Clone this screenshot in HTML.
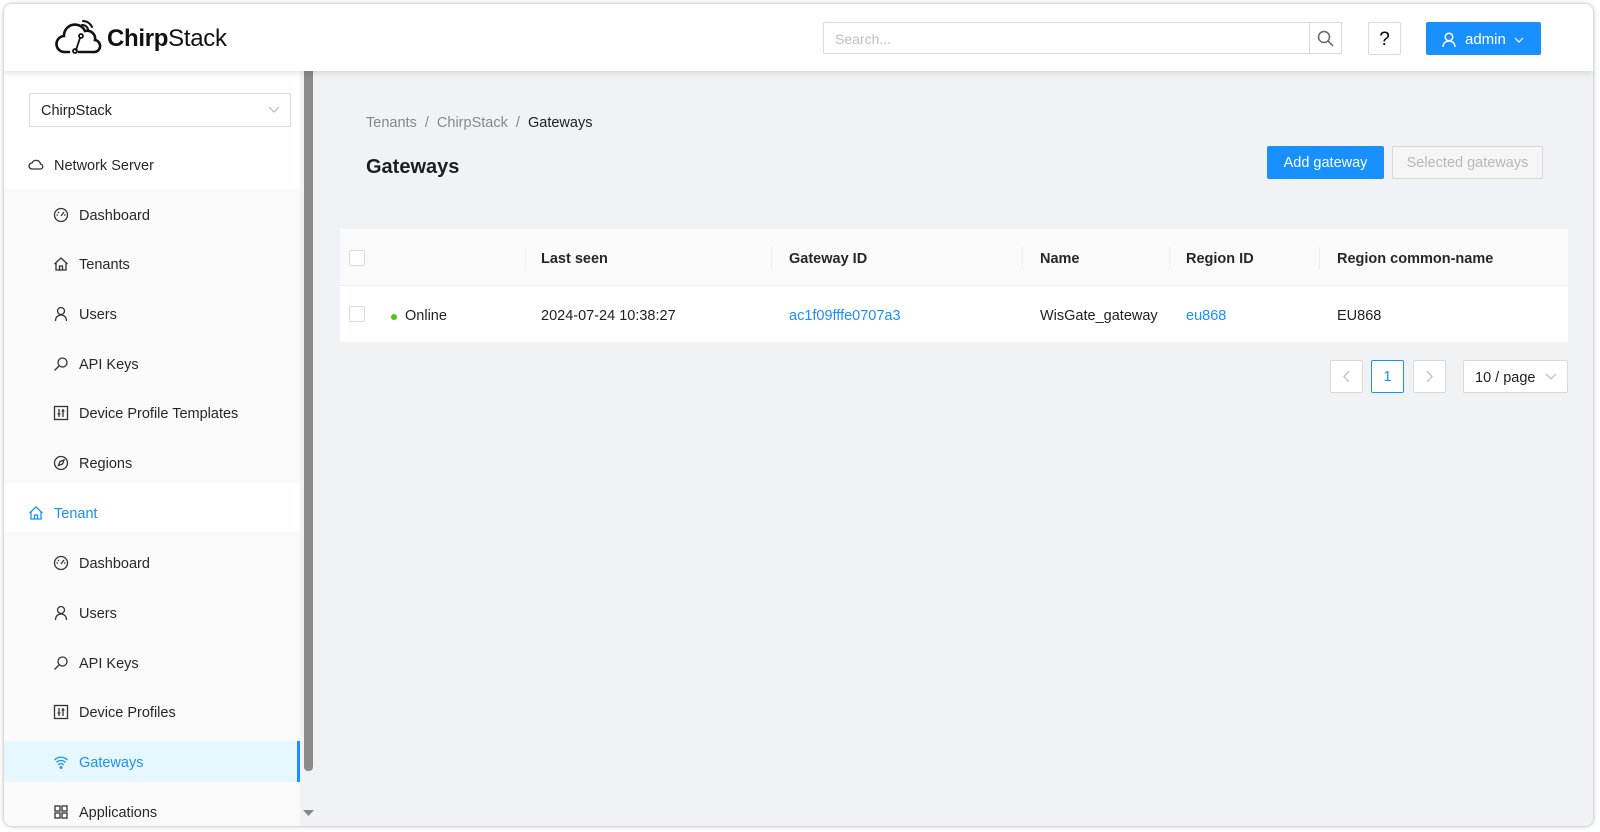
<!DOCTYPE html>
<html><head><meta charset="utf-8"><style>
*{box-sizing:border-box;margin:0;padding:0}
body{width:1600px;height:832px;background:#fff;font-family:"Liberation Sans",sans-serif;font-size:14px;color:rgba(0,0,0,.88);position:relative;overflow:hidden}
.frame{position:absolute;left:4px;top:4px;width:1589px;height:822px;border-radius:8px;background:#f0f2f5;box-shadow:0 0 4px rgba(0,0,0,.35);overflow:hidden}
.hdr{position:absolute;left:0;top:0;width:100%;height:67px;background:#fff;box-shadow:0 2px 6px rgba(0,0,0,.12);z-index:2}
.abs{position:absolute}
.side{position:absolute;left:0;top:67px;width:296px;height:755px;background:#fff}
.sub{position:absolute;left:0;width:296px;background:#fafafa}
.mi{position:absolute;left:0;width:296px;height:40px;line-height:44px;font-size:14.5px;color:rgba(0,0,0,.85)}
.mi svg{position:absolute;top:13px;width:16px;height:16px}
.mi span{position:absolute}
.sc{position:absolute;left:300px;top:67px;width:9px;height:700px;background:#8a8a8a;border-radius:0 0 4px 4px}
.btn{position:absolute;border-radius:2px;font-size:14.5px;text-align:center}
.cell{position:absolute;font-size:14.5px}
.hd{font-weight:bold;color:rgba(0,0,0,.85)}
.cb{position:absolute;width:16px;height:16px;border:1px solid #d9d9d9;border-radius:2px;background:#fff}
</style></head><body>
<div class="frame">
 <div class="hdr">
  <svg class="abs" style="left:51px;top:16px" width="48" height="36" viewBox="0 0 48 36" fill="none" stroke="#111" stroke-width="2.6" stroke-linecap="round">
   <path d="M14 32H10a8 8 0 0 1-1-16 11 11 0 0 1 21-5 8 8 0 0 1 10 9 6 6 0 0 1-2 12H24"/>
   <path d="M27 5a6 6 0 0 1 6 4M28 1a10 10 0 0 1 9 6" stroke-width="2"/>
   <circle cx="26" cy="16" r="2" stroke-width="1.8"/><path d="M25 18l-4 12" stroke-width="1.8"/><circle cx="20" cy="31" r="2" stroke-width="1.8"/>
  </svg>
  <div class="abs" style="left:103px;top:21px;font-size:24px;color:#111;letter-spacing:-0.3px"><b>Chirp</b>Stack</div>
  <div class="abs" style="left:819px;top:18px;width:487px;height:32px;border:1px solid #d9d9d9;border-radius:2px 0 0 2px;background:#fff;padding:8px 11px;color:#bfbfbf;font-size:14px">Search...</div>
  <div class="abs" style="left:1305px;top:18px;width:33px;height:32px;border:1px solid #d9d9d9;background:#fff">
   <svg width="31" height="30" viewBox="0 0 31 30" fill="none" stroke="#666" stroke-width="1.5"><circle cx="14" cy="14" r="5.5"/><path d="M18 18l5 5"/></svg></div>
  <div class="abs" style="left:1364px;top:18px;width:33px;height:33px;border:1px solid #d9d9d9;border-radius:2px;background:#fff;text-align:center;line-height:33px;font-size:19px;color:#000">?</div>
  <div class="abs" style="left:1422px;top:18px;width:115px;height:33px;background:#1890ff;border-radius:2px;color:#fff;font-size:15px;line-height:35px">
   <svg class="abs" style="left:16px;top:10px" width="14" height="15" viewBox="0 0 14 15" fill="none" stroke="#fff" stroke-width="1.5"><circle cx="7" cy="5" r="3.8"/><path d="M1 15c0-4 3-6 6-6s6 2 6 6"/></svg>
   <span class="abs" style="left:39px">admin</span>
   <svg class="abs" style="left:88px;top:14px" width="10" height="8" viewBox="0 0 10 8" fill="none" stroke="#fff" stroke-width="1.2"><path d="M1 2l4 4 4-4"/></svg>
  </div>
 </div>

 <div class="side">
  <div class="abs" style="left:25px;top:22px;width:262px;height:34px;border:1px solid #d9d9d9;border-radius:2px;background:#fff;padding:9px 11px;font-size:14.5px">ChirpStack
   <svg class="abs" style="right:10px;top:12px" width="12" height="8" viewBox="0 0 12 8" fill="none" stroke="#bbb" stroke-width="1.2"><path d="M1 1l5 5 5-5"/></svg></div>
  <div class="mi" style="top:73px"><svg style="left:24px" viewBox="0 0 16 16" fill="none" stroke="#333" stroke-width="1.3"><path d="M4 12a3 3 0 0 1 0-6 4.5 4.5 0 0 1 8.5 1A2.5 2.5 0 0 1 12 12z"/></svg><span style="left:50px">Network Server</span></div>
  <div class="sub" style="top:118px;height:294px"></div>
  <div class="mi" style="top:123px"><svg style="left:49px" viewBox="0 0 16 16" fill="none" stroke="#333" stroke-width="1.3"><circle cx="8" cy="8" r="6.5"/><path d="M8 9l3-4M3.5 8h1.5M11 8h1.5M5 5l1 1"/></svg><span style="left:75px">Dashboard</span></div>
  <div class="mi" style="top:172px"><svg style="left:49px" viewBox="0 0 16 16" fill="none" stroke="#333" stroke-width="1.3"><path d="M1.5 8L8 2l6.5 6M3 7v7h10V7M6.5 14v-4h3v4"/></svg><span style="left:75px">Tenants</span></div>
  <div class="mi" style="top:222px"><svg style="left:49px" viewBox="0 0 16 16" fill="none" stroke="#333" stroke-width="1.3"><circle cx="8" cy="5" r="3.5"/><path d="M2.5 15c0-4 2.5-6 5.5-6s5.5 2 5.5 6"/></svg><span style="left:75px">Users</span></div>
  <div class="mi" style="top:272px"><svg style="left:49px" viewBox="0 0 16 16" fill="none" stroke="#333" stroke-width="1.3"><circle cx="9.5" cy="6.5" r="4.5"/><path d="M6 10l-4.5 4.5"/></svg><span style="left:75px">API Keys</span></div>
  <div class="mi" style="top:321px"><svg style="left:49px" viewBox="0 0 16 16" fill="none" stroke="#333" stroke-width="1.3"><rect x="1.5" y="1.5" width="13" height="13"/><path d="M6 4v8M10 4v8M4.5 9h3M8.5 6h3"/></svg><span style="left:75px">Device Profile Templates</span></div>
  <div class="mi" style="top:371px"><svg style="left:49px" viewBox="0 0 16 16" fill="none" stroke="#333" stroke-width="1.3"><circle cx="8" cy="8" r="6.5"/><path d="M5.5 10.5l1.5-4 4-1.5-1.5 4z"/></svg><span style="left:75px">Regions</span></div>
  <div class="mi" style="top:421px;color:#1890ff"><svg style="left:24px" viewBox="0 0 16 16" fill="none" stroke="#1890ff" stroke-width="1.3"><path d="M1.5 8L8 2l6.5 6M3 7v7h10V7M6.5 14v-4h3v4"/></svg><span style="left:50px">Tenant</span></div>
  <div class="sub" style="top:461px;height:294px"></div>
  <div class="mi" style="top:471px"><svg style="left:49px" viewBox="0 0 16 16" fill="none" stroke="#333" stroke-width="1.3"><circle cx="8" cy="8" r="6.5"/><path d="M8 9l3-4M3.5 8h1.5M11 8h1.5M5 5l1 1"/></svg><span style="left:75px">Dashboard</span></div>
  <div class="mi" style="top:521px"><svg style="left:49px" viewBox="0 0 16 16" fill="none" stroke="#333" stroke-width="1.3"><circle cx="8" cy="5" r="3.5"/><path d="M2.5 15c0-4 2.5-6 5.5-6s5.5 2 5.5 6"/></svg><span style="left:75px">Users</span></div>
  <div class="mi" style="top:571px"><svg style="left:49px" viewBox="0 0 16 16" fill="none" stroke="#333" stroke-width="1.3"><circle cx="9.5" cy="6.5" r="4.5"/><path d="M6 10l-4.5 4.5"/></svg><span style="left:75px">API Keys</span></div>
  <div class="mi" style="top:620px"><svg style="left:49px" viewBox="0 0 16 16" fill="none" stroke="#333" stroke-width="1.3"><rect x="1.5" y="1.5" width="13" height="13"/><path d="M6 4v8M10 4v8M4.5 9h3M8.5 6h3"/></svg><span style="left:75px">Device Profiles</span></div>
  <div class="mi" style="top:670px;height:41px;background:#e6f7ff;color:#1890ff;border-right:3px solid #1890ff"><svg style="left:49px" viewBox="0 0 16 16" fill="none" stroke="#1890ff" stroke-width="1.3"><path d="M1.5 6a9 9 0 0 1 13 0M3.5 8.5a6 6 0 0 1 9 0M5.5 11a3 3 0 0 1 5 0"/><circle cx="8" cy="13.5" r=".8" fill="#1890ff"/></svg><span style="left:75px">Gateways</span></div>
  <div class="mi" style="top:720px"><svg style="left:49px" viewBox="0 0 16 16" fill="none" stroke="#333" stroke-width="1.3"><rect x="2" y="2" width="5" height="5"/><rect x="9" y="2" width="5" height="5"/><rect x="2" y="9" width="5" height="5"/><rect x="9" y="9" width="5" height="5"/></svg><span style="left:75px">Applications</span></div>
 </div>
 <div class="sc"></div>
 <svg class="abs" style="left:299px;top:806px" width="11" height="7" viewBox="0 0 11 7"><path d="M0 0h11L5.5 6z" fill="#888"/></svg>

 <div class="abs" style="left:362px;top:111px;font-size:14.5px;color:rgba(0,0,0,.45)">Tenants&nbsp;&nbsp;/&nbsp;&nbsp;ChirpStack&nbsp;&nbsp;/&nbsp;&nbsp;<span style="color:rgba(0,0,0,.88)">Gateways</span></div>
 <div class="abs" style="left:362px;top:152px;font-size:20px;font-weight:bold;color:rgba(0,0,0,.88)">Gateways</div>
 <div class="btn" style="left:1263px;top:142px;width:117px;height:33px;line-height:35px;background:#1890ff;color:#fff">Add gateway</div>
 <div class="btn" style="left:1388px;top:142px;width:151px;height:33px;line-height:33px;background:#f5f5f5;border:1px solid #d9d9d9;color:rgba(0,0,0,.25)">Selected gateways</div>

 <div class="abs" style="left:336px;top:225px;width:1228px;height:57px;background:#fafafa;border-bottom:1px solid #f0f0f0"></div>
 <div class="abs" style="left:336px;top:282px;width:1228px;height:56px;background:#fff"></div>
 <div class="abs" style="left:521px;top:243px;width:1px;height:22px;background:#eee"></div>
 <div class="abs" style="left:767px;top:243px;width:1px;height:22px;background:#eee"></div>
 <div class="abs" style="left:1018px;top:243px;width:1px;height:22px;background:#eee"></div>
 <div class="abs" style="left:1165px;top:243px;width:1px;height:22px;background:#eee"></div>
 <div class="abs" style="left:1315px;top:243px;width:1px;height:22px;background:#eee"></div>
 <div class="cb" style="left:345px;top:246px"></div>
 <div class="cb" style="left:345px;top:302px"></div>
 <div class="cell hd" style="left:537px;top:247px">Last seen</div>
 <div class="cell hd" style="left:785px;top:247px">Gateway ID</div>
 <div class="cell hd" style="left:1036px;top:247px">Name</div>
 <div class="cell hd" style="left:1182px;top:247px">Region ID</div>
 <div class="cell hd" style="left:1333px;top:247px">Region common-name</div>
 <div class="abs" style="left:387px;top:310px;width:6px;height:6px;border-radius:50%;background:#52c41a"></div>
 <div class="cell" style="left:401px;top:304px">Online</div>
 <div class="cell" style="left:537px;top:304px">2024-07-24 10:38:27</div>
 <div class="cell" style="left:785px;top:304px;color:#1890ff">ac1f09fffe0707a3</div>
 <div class="cell" style="left:1036px;top:304px">WisGate_gateway</div>
 <div class="cell" style="left:1182px;top:304px;color:#1890ff">eu868</div>
 <div class="cell" style="left:1333px;top:304px">EU868</div>

 <div class="abs" style="left:1326px;top:356px;width:33px;height:33px;border:1px solid #d9d9d9;background:#fff;border-radius:2px"><svg width="31" height="31" viewBox="0 0 31 31" fill="none" stroke="#bbb" stroke-width="1.2"><path d="M18 10l-5 5.5 5 5.5"/></svg></div>
 <div class="abs" style="left:1367px;top:356px;width:33px;height:33px;border:1px solid #1890ff;background:#fff;border-radius:2px;text-align:center;line-height:33px;color:#1890ff;font-size:14.5px">1</div>
 <div class="abs" style="left:1409px;top:356px;width:33px;height:33px;border:1px solid #d9d9d9;background:#fff;border-radius:2px"><svg width="31" height="31" viewBox="0 0 31 31" fill="none" stroke="#bbb" stroke-width="1.2"><path d="M13 10l5 5.5-5 5.5"/></svg></div>
 <div class="abs" style="left:1459px;top:356px;width:105px;height:33px;border:1px solid #d9d9d9;background:#fff;border-radius:2px;padding:9px 11px;font-size:14.5px">10 / page
  <svg class="abs" style="right:10px;top:12px" width="12" height="8" viewBox="0 0 12 8" fill="none" stroke="#bbb" stroke-width="1.2"><path d="M1 1l5 5 5-5"/></svg></div>
</div>
</body></html>
